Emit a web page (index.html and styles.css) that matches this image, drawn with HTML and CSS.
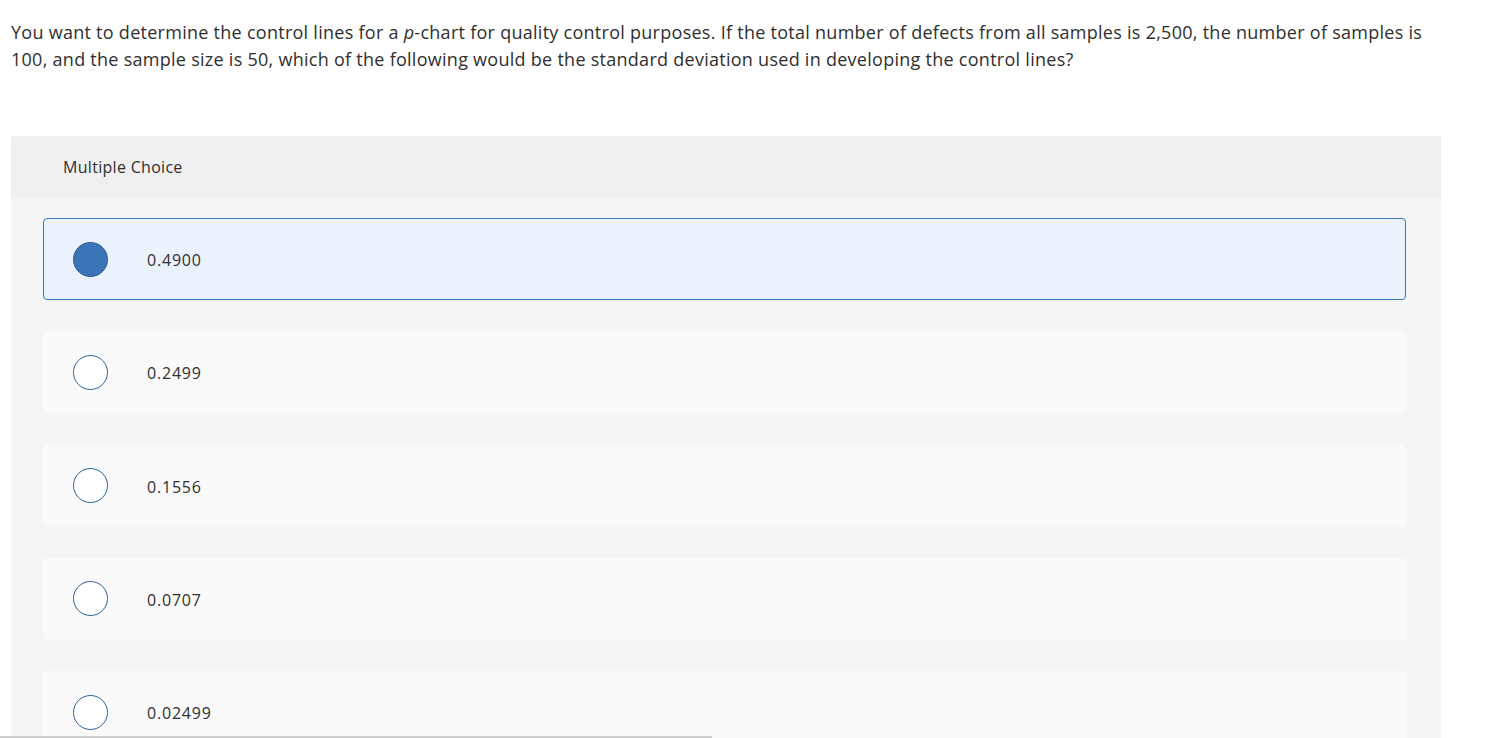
FILE: index.html
```html
<!DOCTYPE html>
<html lang="en">
<head>
<meta charset="utf-8">
<title>Multiple Choice</title>
<link rel="stylesheet" href="styles.css">
</head>
<body>
<div class="page">
  <p class="question">You want to determine the control lines for a <i class="var">p</i>-chart for quality control purposes. If the total number of defects from all samples is 2,500, the number of samples is 100, and the sample size is 50, which of the following would be the standard deviation used in developing the control lines?</p>
  <section class="panel">
    <div class="panel-head">Multiple Choice</div>
    <div class="panel-body">
      <div class="choice selected"><span class="radio"></span><span class="label">0.4900</span></div>
      <div class="choice"><span class="radio"></span><span class="label">0.2499</span></div>
      <div class="choice"><span class="radio"></span><span class="label">0.1556</span></div>
      <div class="choice"><span class="radio"></span><span class="label">0.0707</span></div>
      <div class="choice"><span class="radio"></span><span class="label">0.02499</span></div>
    </div>
  </section>
</div>
<div class="bottom-shadow"></div>
</body>
</html>
```
FILE: styles.css
```css
html, body {
  margin: 0;
  padding: 0;
  background: #ffffff;
  overflow: hidden;
}
body {
  font-family: "Open Sans", "Liberation Sans", sans-serif;
  color: #2f2f2f;
}
.page {
  padding: 19px 11px 0 11px;
}
.question {
  margin: 0;
  font-size: 18px;
  line-height: 27px;
  letter-spacing: 0.27px;
  width: 1430px;
}
.var {
  font-style: italic;
}
.panel {
  margin-top: 63px;
  width: 1430px;
  background: #f5f5f5;
  border-radius: 3px 3px 0 0;
}
.panel-head {
  height: 62px;
  display: flex;
  align-items: center;
  padding-left: 52px;
  background: #f0f0f0;
  font-size: 16px;
  letter-spacing: 0.3px;
  border-radius: 3px 3px 0 0;
}
.panel-body {
  padding: 20px 35px 40px 32px;
  display: flex;
  flex-direction: column;
  gap: 31.3px;
}
.choice {
  height: 82px;
  box-sizing: border-box;
  display: flex;
  align-items: center;
  background: #fafafa;
  border-radius: 4px;
  padding-left: 30px;
}
.choice.selected {
  background: #eaf2fb;
  border: 1px solid #3a78bd;
  padding-left: 29px;
}
.radio {
  width: 35px;
  height: 35px;
  box-sizing: border-box;
  border: 1.5px solid #2f6198;
  border-radius: 50%;
  background: #ffffff;
  flex: none;
}
.selected .radio {
  background: #3b74b7;
  border-color: #2b5a93;
}
.label {
  margin-left: 39px;
  padding-top: 2px;
  font-size: 16px;
  letter-spacing: 0.8px;
}
.bottom-shadow {
  position: fixed;
  left: 0;
  bottom: 0;
  width: 712px;
  height: 2px;
  background: linear-gradient(#d8d8d8, #bdbdbd);
}
```
